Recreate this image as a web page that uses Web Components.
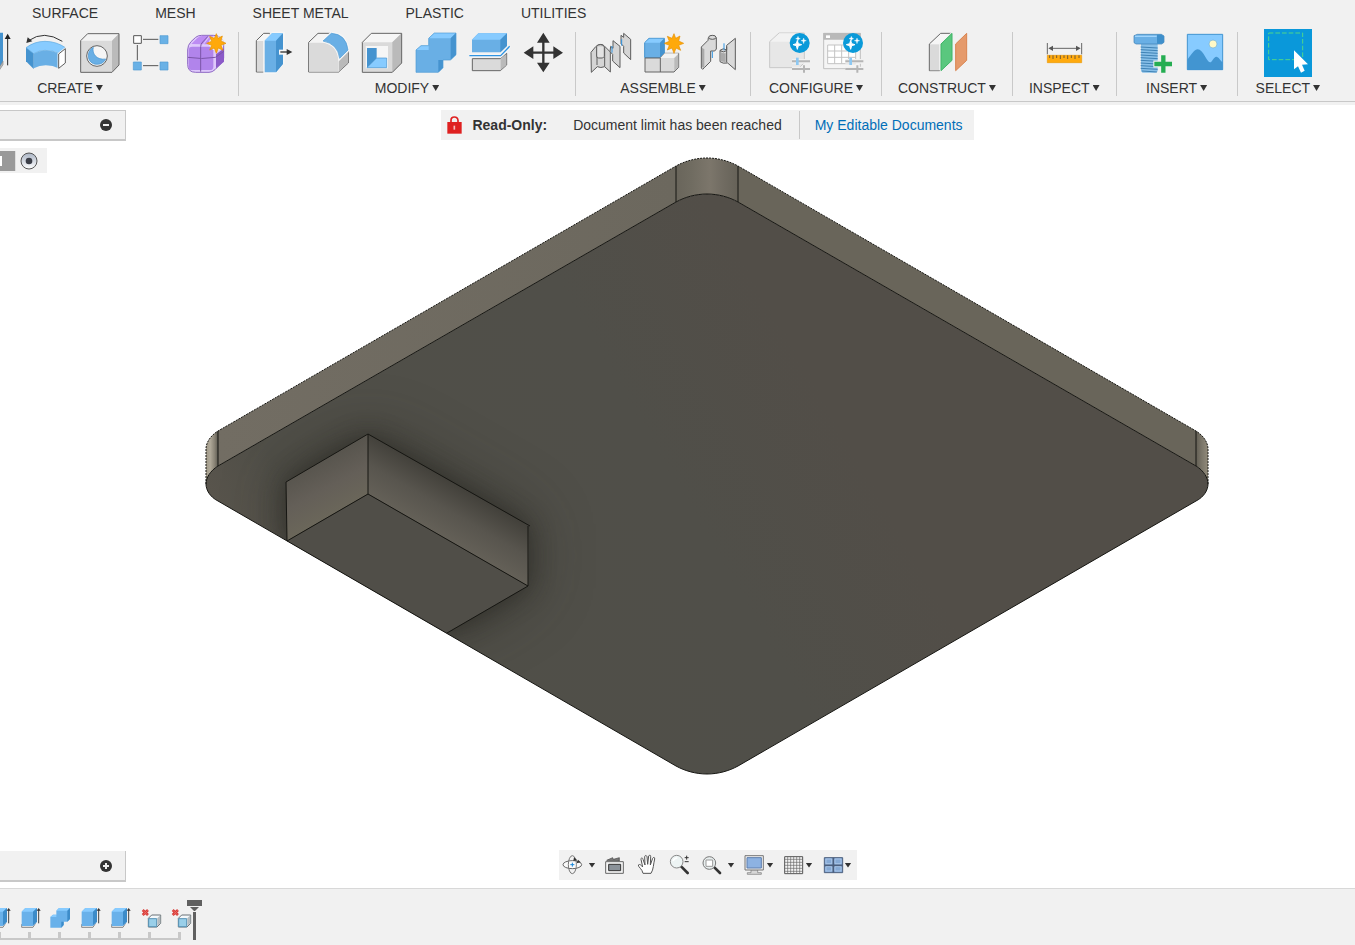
<!DOCTYPE html>
<html lang="en">
<head>
<meta charset="utf-8">
<title>Design workspace</title>
<style>
html,body{height:100%;margin:0}
body{font:14px/20px "Liberation Sans",Arial,sans-serif;color:#333;background:#fff}
</style>
</head>
<body>
<cad-app></cad-app>
<script>
// Eight-pointed "new" burst, centred on x,y
const star = (x, y) => `<path transform="translate(${x} ${y})" d="M0-29 5-15 18-22 14-7 29 0 14 6 20 21 6 14 0 30-6 14-20 20-14 6-29 0-14-6-20-21-6-15Z" fill="#ffa90a" stroke="#e58e00" stroke-width="2"/>`;
const burstBadge = (x, y) => `<g transform="translate(${x} ${y})"><circle r="30" fill="#0a9ad9"/><path d="M-7-8-4 2 6 5-4 8-7 19-10 8-20 5-10 2Z" fill="#fff" stroke="#fff" stroke-width="3"/><path d="M12-15 14-9 20-7 14-5 12 2 10-5 4-7 10-9ZM-5-20-3-15 2-13-3-11-5-7-7-11-12-13-7-15Z" fill="#fff" stroke="#fff"/></g>`;
const sliders = x => `<path d="M${x} 184h54M${x} 207h54" stroke="#f1f1f1" stroke-width="14"/><path d="M${x} 184h54M${x} 207h54M${x+36} 196v22" stroke="#b5b5b5" stroke-width="6"/><path d="M${x+16} 173v22" stroke="#8dc8f2" stroke-width="8"/>`;

// name: [viewBox, width, height, markup]
const tool = (x, art) => [`${x} 87 162 144`, 54, 48, art];
const nav = (x, art, w = 24) => [`${x} 24 ${w * 3} 72`, w, 24, art];
const ICONS = {
  extrude: tool(-114, `<path d="M-60 98H9V190l-12 14h-57Z" fill="#4593cf"/><path d="M-60 110H-4v94h-56Z" fill="#69afe5"/><path d="M-60 204h57l12-20v10l-12 18h-57Z" fill="#bbb" stroke="#888" stroke-width="2"/><path d="M23 196v-90" stroke="#222" stroke-width="3"/><path d="M14 117 23 101l9 16Z" fill="#222"/>`),
  revolve: tool(48, `<path d="M78 143q26-19 57-19 34 0 63 20l-19 17q-20-10-44-10-18 0-34 10Z" fill="#87cbff" stroke="#5ba7df" stroke-width="2"/><path d="M101 161q34-19 78 0v45q-42-20-78-1Z" fill="#69afe5"/><path d="M78 143l23 18v46l-23-23Z" fill="#4593cf"/><path d="M176 162l20-16v43l-20 16Z" fill="#fff" stroke="#f1f1f1" stroke-width="7"/><path d="M176 162l20-16v43l-20 16Z" fill="#fff" stroke="#5e5e5e" stroke-width="3"/><path d="M187 124q-55-35-101-2" fill="none" stroke="#333" stroke-width="3"/><path d="M79 129l4-17 14 12Z" fill="#333"/>`),
  hole: tool(210, `<path d="M242 122l21-21h94v94l-21 22h-94Z" fill="#dadada"/><path d="M242 122l21-21h94l-21 21Z" fill="#f3f3f3"/><path d="M336 122l21-21v94l-21 22Z" fill="#bababa"/><path d="M242 122l21-21h94v94l-21 22h-94Z" fill="none" stroke="#666" stroke-width="3"/><circle cx="291" cy="168" r="31" fill="#f5f5f5" stroke="#666" stroke-width="3"/><path d="M280 142c-5 19 10 39 37 35-5 11-14 16-26 16-15 0-26-11-26-25 0-12 5-21 15-26Z" fill="#69afe5" stroke="#4593cf" stroke-width="2"/>`),
  pattern: tool(372, `<path d="M429 118h46M429 197h46M412 135v46" stroke="#555" stroke-width="3"/><path d="M401 107h23v23h-23Z" fill="#fff" stroke="#555" stroke-width="3"/><path d="M480 107h24v24h-24ZM400 186h24v24h-24ZM480 186h24v24h-24Z" fill="#69b1e6" stroke="#4f9bd3" stroke-width="2"/>`),
  form: tool(534, `<path d="M563 150q0-15 10-25l14-13q7-6 18-6h35q28 0 31 28v40q0 9-8 17l-18 18q-8 8-18 8h-40q-24 0-24-24Z" fill="#dec8fb" stroke="#8f69c4" stroke-width="3"/><path d="M574 132l18-18q6-6 14-6h20l-17 25ZM612 133l18-24q18 0 25 6l-10 18Z" fill="#bd8cf3"/><path d="M566 150q0-10 11-10h53q10 0 10 10v50q0 10-10 10h-53q-11 0-11-10Z" fill="#b184eb"/><path d="M648 163l24-18v40l-24 20Z" fill="#8b5ac8"/><path d="M602 215v-75q0-8 6-14l16-17M564 172q40 7 82 0l26-18" fill="none" stroke="#7b55a8" stroke-width="3"/><circle cx="649" cy="130" r="22" fill="#f1f1f1"/>${star(649,130)}`),

  press: tool(30, `<path d="M64 122l22-22h18v94l-16 22h-24Z" fill="#f6f6f6" stroke="#666" stroke-width="3"/><path d="M66 123h20v91H66Z" fill="#dadada"/><path d="M85 119l26-24h38v95l-27 31H85Z" fill="#f6f6f6"/><path d="M89 122l22-22h32v92l-20 25H89Z" fill="#69afe5"/><path d="M89 122l22-22h32l-20 22Z" fill="#87cbff"/><path d="M123 122l21-22v92l-21 25Z" fill="#4593cf"/><path d="M132 149h24v15h-24Z" fill="#f6f6f6"/><path d="M136 156h24" stroke="#333" stroke-width="4"/><path d="M155 147l17 9-17 9Z" fill="#333"/>`),
  fillet: tool(192, `<path d="M221 127l28-27h38q53 4 53 58v31l-29 27h-90Z" fill="#f4f4f4" stroke="#666" stroke-width="3"/><path d="M222 128h39q50 4 50 60v27h-89Z" fill="#dadada"/><path d="M312 176l27-25v37l-27 27Z" fill="#bababa"/><path d="M264 123l25-23q44 2 50 50l-25 25q-6-44-50-52Z" fill="#69afe5" stroke="#f6f6f6" stroke-width="9"/><path d="M264 123l25-23q44 2 50 50l-25 25q-6-44-50-52Z" fill="#69afe5" stroke="#4b9ad4" stroke-width="2"/>`),
  shell: tool(354, `<path d="M382 127l27-27h91v89l-28 28h-90Z" fill="#dadada"/><path d="M382 127l27-27h91l-28 27Z" fill="#f6f6f6"/><path d="M472 127l28-27v89l-28 28Z" fill="#bababa"/><path d="M382 127l27-27h91v89l-28 28h-90Z" fill="none" stroke="#666" stroke-width="3"/><path d="M392 138h67v67h-67Z" fill="#f6f6f6"/><path d="M396 144h29v31l-29 28Z" fill="#4593cf"/><path d="M396 203l29-29h30v29Z" fill="#87cbff" stroke="#4593cf" stroke-width="2"/>`),
  combine: tool(516, `<path d="M543 150l15-13h23v-22l17-16h65v65l-17 16h-22v23l-14 14h-67Z" fill="#69afe5"/><path d="M581 115l17-16h65l-16 16ZM543 150l15-13h23v13Z" fill="#87cbff"/><path d="M647 115l16-16v65l-16 16ZM610 180h14v23l-14 14Z" fill="#4593cf"/><path d="M543 150l15-13h23v-22l17-16h65v65l-17 16h-22v23l-14 14h-67Z" fill="none" stroke="#4b9ad4" stroke-width="2"/>`),
  split: tool(678, `<path d="M711 119l19-19h86v38l-20 19h-85Z" fill="#69afe5"/><path d="M711 119l19-19h86l-20 19Z" fill="#87cbff"/><path d="M796 119l20-19v38l-20 19Z" fill="#4593cf"/><path d="M712 176h84l19-16v35l-19 17h-84Z" fill="#dadada" stroke="#666" stroke-width="3"/><path d="M797 178l17-15v31l-17 16Z" fill="#bababa"/><path d="M703 167h94l27-28" fill="none" stroke="#f6f6f6" stroke-width="11"/><path d="M703 167h94l27-28" fill="none" stroke="#2f94e2" stroke-width="4"/>`),
  move: tool(840, `<path d="M925 116v84M883 158h84" stroke="#333" stroke-width="7"/><path d="M925 98l19 30h-38ZM925 217l-19-29h38ZM866 158l29-19v38ZM984 158l-29-19v38Z" fill="#333"/>`),

  joint: tool(36, `<g fill="#d5d5d5" stroke="#5c5c5c" stroke-width="3"><path d="M161 100l21 18v61l-21-20v-20l-8-8v-25l8 6Z"/><path d="M129 122l21 17v64l-22-20v-20l-8-8 2-16 7 6Z"/><path d="M63 157l14-17q14-12 25-3l19 19v60l-17-16q-12 5-22 0l-18 17Z"/><path d="M81 145v50M104 143v56" fill="none"/><ellipse cx="91" cy="140" rx="11" ry="6"/><path d="M80 141v27q0 6 6 6h12l5-5v-28" fill="#e3e3e3"/></g><path d="M155 118v19M126 138v20" stroke="#2f94e2" stroke-width="3"/>`),
  component: tool(198, `<path d="M224 128l13-13h46v46l-13 12h-46Z" fill="#69afe5" stroke="#4593cf" stroke-width="3"/><path d="M225 128l13-12h45l-13 12Z" fill="#87cbff"/><path d="M270 128l13-13v46l-13 12Z" fill="#4593cf"/><path d="M225 174h46l13-14h42v42l-14 14h-87Z" fill="#dadada" stroke="#666" stroke-width="3"/><path d="M271 174l13-14h42l-14 14Z" fill="#f2f2f2"/><path d="M271 174v42" stroke="#666" stroke-width="3"/><path d="M313 175l12-12v38l-12 13Z" fill="#bababa"/><circle cx="312" cy="130" r="23" fill="#f1f1f1"/>${star(312,130)}`),
  asbuilt: tool(360, `<g fill="#dadada" stroke="#5c5c5c" stroke-width="3"><path d="M394 141l20-20 1-8q12-12 24 0v34l-5 6h-12v31l-24 24-4-4Z"/><path d="M396 143l7 5v56l-7-3Z" fill="#aaa" stroke="none"/><path d="M496 115v94l-23-20q-15 3-23-4v-34q10-9 20-1v-14Z"/><path d="M470 140v47M450 152q10 7 20 0" fill="none"/><path d="M452 157q8 4 15 2v27q-9 0-15-4Z" fill="#aaa" stroke="none"/><ellipse cx="427" cy="112" rx="11" ry="6"/></g><path d="M427 154v20M462 130v21" stroke="#2f94e2" stroke-width="3"/>`),

  config: tool(576, `<path d="M599 125l28-26h76v89l-15 15h-89Z" fill="#e7e7e7" stroke="#c8c8c8" stroke-width="3"/><path d="M601 125l27-25h60l-16 25Z" fill="#f2f2f2"/>${sliders(666)}${burstBadge(689,129)}`),
  table: tool(738, `<path d="M761 100h110v106H761Z" fill="#f5f5f5" stroke="#c0c0c0" stroke-width="3"/><path d="M760 99h112v20H760Z" fill="#b9b9b9"/><path d="M768 106h12v8h-12Z" fill="#fff"/><path d="M773 135h84v56h-84ZM773 153h84M773 172h84M794 135v56M815 135v56M836 135v56" fill="#fff" stroke="#c3c3c3" stroke-width="3"/>${sliders(826)}${burstBadge(849,129)}`),

  plane: tool(117, `<path d="M145 132l34-32h32v81l-32 31h-34Z" fill="#f6f6f6" stroke="#666" stroke-width="3"/><path d="M147 133h28v78h-28Z" fill="#dadada"/><path d="M176 130l38-36v88l-38 36Z" fill="#f1f1f1"/><path d="M180 132l33-32v81l-33 31Z" fill="#5ac77e" stroke="#3eb567" stroke-width="3"/><path d="M224 132l33-32v81l-33 31Z" fill="#e59a6b" stroke="#d98450" stroke-width="3"/>`),
  measure: tool(471, `<path d="M502 129v34M605 129v34M514 145h80" stroke="#666" stroke-width="3" fill="none"/><path d="M505 145l14-8v16ZM602 145l-14-8v16Z" fill="#555"/><path d="M502 166h103v22H502Z" fill="#ffaa0e" stroke="#e89a0a" stroke-width="2"/><path d="M509 166v8M519 166v11M530 166v8M541 166v11M552 166v8M563 166v11M574 166v8M585 166v11M597 166v8" stroke="#755a32" stroke-width="3"/>`),

  bolt: tool(21, `<path d="M75 130h50v84l-7 4H80l-5-4Z" fill="#87bfe8"/><path d="M54 107l10-4h72l8 5v19l-7 5H60l-6-4Z" fill="#69afe5" stroke="#397db2" stroke-width="2"/><path d="M123 104h14l7 5v18l-7 4h-14Z" fill="#3e8fcb"/><path d="M57 107h65v4H57Z" fill="#a1d5fc"/><path d="M74 141l51 3M74 149l51 3M74 157l51 3M74 165l51 3M74 173l51 3M74 181l51 3M74 189l51 3M74 197l51 3M74 205l51 3M78 213l45 3" stroke="#3f82b5" stroke-width="3"/><path d="M142 163v58M112 192h58" stroke="#f1f1f1" stroke-width="21"/><path d="M142 166v52M115 192h53" stroke="#25ad52" stroke-width="13"/>`),
  image: tool(183, `<path d="M214 103h106v106H214Z" fill="#87cbff"/><path d="M214 179c15-19 22-31 31-31 16 0 28 39 37 39 7 0 11-17 19-17 7 0 12 12 19 17v23H214Z" fill="#4295d1"/><circle cx="291" cy="132" r="12" fill="#fff9c7" stroke="#6eafdb" stroke-width="2"/><path d="M214 103h106v106H214Z" fill="none" stroke="#4295d1" stroke-width="3"/>`),
  select: tool(435, `<path d="M444 87h144v144H444Z" fill="#0a98da"/><path d="M458 99h102v80H458Z" fill="none" stroke="#4fd68b" stroke-width="3" stroke-dasharray="14 6"/><path d="M534 151v57l12-9 9 19 11-6-8-18 18-1Z" fill="#fff"/>`),

  orbit: nav(21, `<ellipse cx="55" cy="59" rx="28" ry="12" fill="#f9f9f9" stroke="#666" stroke-width="3"/><ellipse cx="55" cy="59" rx="12" ry="27" fill="none" stroke="#777" stroke-width="3"/><path d="M46 50h18v18H46Z" fill="#f9f9f9"/><path d="M55 53v12M49 59h12" stroke="#1584d8" stroke-width="3"/><path d="M60 37l10 9-12 2ZM72 44l8 8-12 3Z" fill="#333"/>`, 28),
  look: nav(147, `<path d="M155 46l18-8 2 5 18-5v10Z" fill="#777" stroke="#444" stroke-width="2"/><path d="M152 50h53v35h-53Z" fill="#f6f6f6" stroke="#666" stroke-width="3"/><path d="M161 58h36v19h-36Z" fill="#8b9299" stroke="#333" stroke-width="3"/>`),
  pan: nav(243, `<path d="M264 85c-2-13-15-19-14-25 4-4 9 1 13 6l-5-23c0-6 5-5 6 0l6 17-1-25c1-5 6-4 7 0l2 23 3-25c2-4 7-3 6 2l-1 25 7-20c3-5 7-3 6 2-4 15-3 31-11 43Z" fill="#fff" stroke="#555" stroke-width="3"/>`),
  zoom: nav(339, `<path d="M379 65l19 19" stroke="#333" stroke-width="8" stroke-linecap="round"/><circle cx="365" cy="50" r="19" fill="#edf4f4" stroke="#888" stroke-width="3"/><path d="M354 48q4-10 13-9" stroke="#fff" stroke-width="5" fill="none"/><path d="M395 32v12M389 38h12M389 50h12" stroke="#333" stroke-width="3"/>`),
  fit: nav(435, `<path d="M478 67l17 17" stroke="#333" stroke-width="8" stroke-linecap="round"/><circle cx="463" cy="54" r="19" fill="#e8eeee" stroke="#777" stroke-width="3"/><path d="M453 45h20v19h-20Z" fill="#fff" stroke="#999" stroke-width="3"/>`, 28),
  display: nav(561, `<path d="M585 74h20v9h11v5h-42v-5h11Z" fill="#d7d7d7" stroke="#777" stroke-width="2"/><path d="M567 32h55v43h-55Z" fill="#eee" stroke="#777" stroke-width="3"/><path d="M573 38h43v31h-43Z" fill="#8db2e2" stroke="#5e7fae" stroke-width="3"/>`),
  grid: nav(675, `<path d="M683 35h54v51h-54Z" fill="#f4f4f4" stroke="#555" stroke-width="3"/><path d="M692 35v51M701 35v51M710 35v51M719 35v51M728 35v51M683 43h54M683 52h54M683 61h54M683 70h54M683 79h54" stroke="#666" stroke-width="2"/>`),
  views: nav(789, `<path d="M799 38h55v45h-55Z" fill="#85a9d5" stroke="#4c5f7d" stroke-width="3"/><path d="M826 38v45M799 61h55" stroke="#4c5f7d" stroke-width="5"/><path d="M804 42h17v14h-17ZM831 42h18v14h-18ZM804 65h17v13h-17ZM831 65h18v13h-18Z" fill="none" stroke="#b8d0ee" stroke-width="2"/>`),

  tExtrude: ['0 0 90 72', 30, 24, `<path d="M20 58l12-12h30v8L54 67H20Z" fill="#e8e8e8" stroke="#888" stroke-width="3"/><path d="M20 20l11-11h35v42l-12 12H20Z" fill="#69b1ea"/><path d="M20 20l11-11h35l-12 11Z" fill="#87cbff"/><path d="M54 20l12-11v40L54 61Z" fill="#3d8cc9"/><path d="M71 55V15" stroke="#444" stroke-width="3"/><path d="M65 17l6-8 6 8Z" fill="#333"/>`],
  tCombine: ['0 0 90 72', 30, 24, `<path d="M16 36l8-7h10V17l8-8h33v33l-8 8H56v10l-7 8H16Z" fill="#69b1ea"/><path d="M34 17l8-8h33l-8 8ZM16 36l8-7h10v7Z" fill="#87cbff"/><path d="M67 17l8-8v33l-8 8ZM49 50h7v10l-7 8Z" fill="#3d8cc9"/>`],
  tError: ['0 0 90 72', 30, 24, `<path d="M40 40l10-10h27v25L66 66H40Z" fill="#f4f8fa" stroke="#697176" stroke-width="3"/><path d="M41 41h24v24H41Z" fill="#99cfe9" stroke="#5794b6" stroke-width="3"/><path d="M67 40l9-9v23l-9 9Z" fill="#b4bcc0"/><path d="M23 15l16 15M39 15L23 30" stroke="#d83c38" stroke-width="8"/><path d="M24 16l13 13M38 16L25 29" stroke="#f07874" stroke-width="2"/>`]
};

const svgIcon = name => {
  const [box, w, h, art] = ICONS[name];
  return `<svg viewBox="${box}" width="${w}" height="${h}" fill="none" aria-hidden="true">${art}</svg>`;
};
const RESET = `*,:host{box-sizing:border-box}button{font:inherit;color:inherit;background:none;border:0;margin:0;padding:0;cursor:pointer}svg{display:block}`;
const CARET = `.caret{flex:none;width:7px;height:6px;background:#333;clip-path:polygon(0 0,100% 0,50% 100%)}`;

const define = (name, render) => customElements.define(name, class extends HTMLElement {
  connectedCallback() {
    if (this.shadowRoot) return;
    this.attachShadow({ mode: 'open' }).innerHTML = render(this);
  }
});

define('tool-button', el => `<style>${RESET}:host{display:block}button{display:block}</style>
  <button type="button" aria-label="${el.getAttribute('icon')}">${svgIcon(el.getAttribute('icon'))}</button>`);

define('nav-button', el => `<style>${RESET}${CARET}:host{display:block}button{display:flex;align-items:center}.caret{height:5px}</style>
  <button type="button" aria-label="${el.getAttribute('icon')}">${svgIcon(el.getAttribute('icon'))}${el.hasAttribute('menu') ? '<span class="caret"></span>' : ''}</button>`);

define('tool-group', el => `<style>${RESET}${CARET}
  :host{display:flex;flex:none}
  :host([clipped]){margin-left:-98px}
  :host([clipped]) .icons{padding-left:54px}
  .body{padding:0 6px;display:flex;flex-direction:column;gap:1px}
  .icons{display:flex;justify-content:center}
  .label{display:flex;align-items:center;justify-content:center;gap:3px;height:20px;padding:0 10px}
  :host([roomy]) .label{padding:0 12px}
  .rule{width:1px;margin:3px 0 2px;background:#c9c9c9}
  :host([last]) .rule{display:none}</style>
  <div class="body"><div class="icons"><slot></slot></div>
  <button class="label" type="button" aria-haspopup="menu">${el.getAttribute('label')}<span class="caret"></span></button></div><div class="rule"></div>`);

define('app-header', () => {
  const groups = [
    ['CREATE', 'extrude revolve hole pattern form', 'clipped'],
    ['MODIFY', 'press fillet shell combine split move'],
    ['ASSEMBLE', 'joint component asbuilt'],
    ['CONFIGURE', 'config table', 'roomy'],
    ['CONSTRUCT', 'plane'],
    ['INSPECT', 'measure'],
    ['INSERT', 'bolt image'],
    ['SELECT', 'select', 'roomy last']
  ];
  return `<style>${RESET}
  :host{display:block;overflow:hidden;background:#f1f1f1;padding-bottom:3px}
  nav{display:flex;gap:57px;padding:3px 32px}
  .tools{display:flex;padding:3px 0;border-bottom:1px solid #c8c8c8}</style>
  <nav>${['SURFACE', 'MESH', 'SHEET METAL', 'PLASTIC', 'UTILITIES'].map(t => `<button type="button">${t}</button>`).join('')}</nav>
  <div class="tools">${groups.map(([l, icons, flag = '']) => `<tool-group label="${l}" ${flag}>${icons.split(' ').map(i => `<tool-button icon="${i}"></tool-button>`).join('')}</tool-group>`).join('')}</div>`;
});

define('side-panel', el => `<style>${RESET}
  :host{display:flex;align-items:center;justify-content:flex-end;width:126px;height:31px;padding-right:12px;background:#f1f1f1;border:solid #c8c8c8;border-width:0 1px 2px 0}
  :host([open]){border-top-width:1px}</style>
  <button type="button" aria-label="Toggle panel"><svg width="14" height="14" viewBox="0 0 14 14"><circle cx="7" cy="7" r="6" fill="#333"/><path d="${el.hasAttribute('open') ? 'M4 7h6' : 'M4 7h6M7 4v6'}" stroke="#eee" stroke-width="2"/></svg></button>`);

define('browser-root', () => `<style>${RESET}
  :host{display:flex;align-items:center;width:47px;height:25px;background:#f1f1f1;gap:4px}
  .name{width:16px;height:20px;padding-top:5px;background:#999;border-right:1px solid #ddd}
  .name::before{content:"";display:block;width:2px;height:10px;background:#fff}</style>
  <div class="name"></div>
  <button type="button" aria-label="Activate"><svg width="18" height="18" viewBox="0 0 54 54"><defs><linearGradient id="g" x2="0" y2="1"><stop stop-color="#aab4c4"/><stop offset="1" stop-color="#fff"/></linearGradient></defs><circle cx="27" cy="27" r="24" fill="url(#g)" stroke="#555" stroke-width="3"/><circle cx="27" cy="27" r="10" fill="#3c3f48"/></svg></button>`);

define('read-only-banner', () => `<style>${RESET}
  :host{display:flex;align-items:center;height:30px;background:#f1f1f1;padding:0 11px 0 6px}
  strong{margin:0 26px 0 10px}
  .rule{align-self:stretch;width:1px;margin:1px 15px 1px 17px;background:#c8c8c8}
  a{color:#006eb8;text-decoration:none}</style>
  <svg width="15" height="18" viewBox="0 0 45 54" fill="none"><path d="M12 20v-7q0-10 10-10t11 10v7" stroke="#df2020" stroke-width="5"/><path d="M1 18h43v35H1Z" fill="#df2020"/><path d="M22 29v12" stroke="#f6bcbc" stroke-width="5"/></svg>
  <strong>Read-Only:</strong><span>Document limit has been reached</span><span class="rule"></span><a href="#documents">My Editable Documents</a>`);

define('navigation-bar', () => `<style>${RESET}:host{display:flex;align-items:center;gap:8px;height:30px;padding:0 5px 0 2px;background:#f1f1f1}</style>
  ${[['orbit', 1], ['look'], ['pan'], ['zoom'], ['fit', 1], ['display', 1], ['grid', 1], ['views', 1]].map(([n, m]) => `<nav-button icon="${n}" ${m ? 'menu' : ''}></nav-button>`).join('')}`);

define('model-canvas', () => `<style>:host{display:block}svg{display:block;width:100%;height:100%}</style>
<svg viewBox="0 105 1355 783" preserveAspectRatio="xMidYMid slice" role="img" aria-label="Plate with block">
<defs>
  <linearGradient id="face" x1="206" y1="484" x2="707" y2="194" gradientUnits="userSpaceOnUse"><stop stop-color="#58544c"/><stop offset=".12" stop-color="#504f48"/><stop offset=".7" stop-color="#504f49"/><stop offset="1" stop-color="#524e48"/></linearGradient>
  <linearGradient id="sideL" x1="218" y1="0" x2="676" y2="0" gradientUnits="userSpaceOnUse"><stop stop-color="#726d63"/><stop offset="1" stop-color="#6c685e"/></linearGradient>
  <linearGradient id="top"><stop stop-color="#69655b"/><stop offset=".25" stop-color="#706c61"/><stop offset=".55" stop-color="#7c766b"/><stop offset=".75" stop-color="#716c62"/><stop offset="1" stop-color="#666258"/></linearGradient>
  <linearGradient id="cornerL"><stop stop-color="#a09988"/><stop offset=".35" stop-color="#b0a999"/><stop offset=".7" stop-color="#8b8577"/><stop offset="1" stop-color="#5f5c53"/></linearGradient>
  <linearGradient id="cornerR"><stop stop-color="#625e54"/><stop offset=".5" stop-color="#7c776a"/><stop offset="1" stop-color="#928b7b"/></linearGradient>
  <linearGradient id="boxL" x1="315" y1="462" x2="342" y2="512" gradientUnits="userSpaceOnUse"><stop stop-color="#57544d"/><stop offset=".5" stop-color="#645f58"/><stop offset="1" stop-color="#6b675a"/></linearGradient>
  <linearGradient id="boxR" x1="451" y1="482" x2="422" y2="532" gradientUnits="userSpaceOnUse"><stop stop-color="#43413b"/><stop offset=".45" stop-color="#58554e"/><stop offset="1" stop-color="#67635a"/></linearGradient>
  <clipPath id="clip"><path id="f" d="M676 202C685 197 696 194 707 194S729 197 738 202L1196 466C1204 471 1208 478 1208 484S1204 497 1196 501L738 766C729 771 718 774 707 774S685 771 676 766L218 501C210 497 206 490 206 484S210 471 218 466Z"/></clipPath>
  <filter id="near" x="-50%" y="-50%" width="200%" height="200%" color-interpolation-filters="sRGB"><feGaussianBlur stdDeviation="13"/></filter>
  <filter id="far" x="-60%" y="-60%" width="220%" height="220%" color-interpolation-filters="sRGB"><feGaussianBlur stdDeviation="32"/></filter>
</defs>
<path d="M676 166 218 431V466L676 202Z" fill="url(#sideL)"/>
<path d="M738 166 1196 431V466L738 202Z" fill="#69655a"/>
<path d="M676 166C685 161 696 158 707 158S729 161 738 166V202C729 197 718 194 707 194S685 197 676 202Z" fill="url(#top)"/>
<path d="M218 431C210 436 206 443 206 449V484C206 478 210 471 218 466Z" fill="url(#cornerL)"/>
<path d="M1196 431C1204 436 1208 443 1208 449V484C1208 478 1204 471 1196 466Z" fill="url(#cornerR)"/>
<use href="#f" fill="url(#face)"/>
<g clip-path="url(#clip)" fill="#24231e"><path d="M368 434 529 526V586L447 633 287 541 286 482Z" opacity=".5" filter="url(#far)"/><path d="M368 434 529 526V586L447 633 287 541 286 482Z" opacity=".6" filter="url(#near)"/></g>
<path d="M368 434 286 482 287 541 368 494Z" fill="url(#boxL)"/>
<path d="M368 434 529 526 528 586 368 494Z" fill="url(#boxR)"/>
<path d="M368 494 528 586 447 633 287 541Z" fill="#504e48"/>
<g fill="none" stroke="#161612">
  <use href="#f"/>
  <path d="M206 484V449C206 443 210 436 218 431L676 166C685 161 696 158 707 158S729 161 738 166L1196 431C1204 436 1208 443 1208 449V484" stroke-dasharray="2 1"/>
  <path d="M676 166V202M738 166V202M218 431V466M1196 431V466"/>
  <path d="M287 541 286 482 368 434 530 526M368 434V494M287 541 368 494 528 586V526M528 586 447 633"/>
</g>
</svg>`);

define('design-timeline', () => `<style>${RESET}
  :host{display:flex;flex-direction:column;height:57px;background:#f1f1f1;border-top:1px solid #d8d8d8;overflow:hidden}
  .row{display:flex;align-items:flex-start;height:51px;padding-top:11px}
  .items{display:flex;margin:5px 0 0 -15px}
  .history{flex:none;width:187px}
  .track{height:8px;margin-top:3px;width:181px;border-bottom:2px solid #c8c8c8;background:repeating-linear-gradient(90deg,#c8c8c8 0 1px,transparent 1px 28px,#c8c8c8 28px 30px)}</style>
  <div class="row"><div class="history"><div class="items">${['tExtrude', 'tExtrude', 'tCombine', 'tExtrude', 'tExtrude', 'tError', 'tError'].map(n => `<tool-button icon="${n}"></tool-button>`).join('')}</div><div class="track"></div></div>
  <svg width="15" height="40" viewBox="0 0 15 40" aria-hidden="true"><path d="M0 0h15v6H0ZM3 7h9l-4 4H7ZM6 12h3v28H6Z" fill="#606060"/></svg></div>`);

// The side panels and bars float over the model
define('cad-app', () => `<style>
  :host{display:flex;flex-direction:column;min-height:100vh}
  main{flex:1;position:relative;display:flex;flex-direction:column;align-items:center;justify-content:space-between;padding:5px 0 8px 60px}
  model-canvas{position:absolute;inset:0}
  read-only-banner,navigation-bar{position:relative}
  aside{position:absolute;left:0}
  .browser{top:5px}.comments{bottom:6px}
  browser-root{margin-top:7px}</style>
  <app-header></app-header>
  <main><model-canvas></model-canvas><read-only-banner></read-only-banner>
  <aside class="browser"><side-panel open></side-panel><browser-root></browser-root></aside>
  <aside class="comments"><side-panel></side-panel></aside>
  <navigation-bar></navigation-bar></main>
  <design-timeline></design-timeline>`);
</script>
</body>
</html>
